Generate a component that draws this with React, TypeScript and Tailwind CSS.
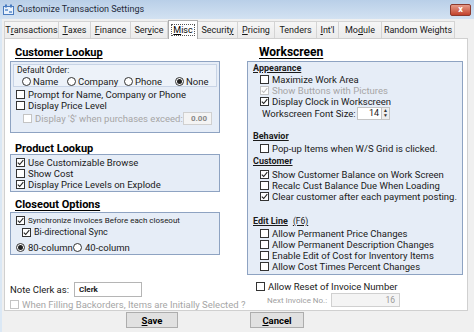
import React from "react";

const FONT = "font-['Roboto','Noto_Sans',sans-serif]";

function Check({ on, disabled }: { on?: boolean; disabled?: boolean }) {
  return (
    <span
      className={`inline-flex h-[9px] w-[9px] shrink-0 items-center justify-center border bg-white ${
        disabled ? "border-[#c4c4c4]" : "border-[#333]"
      }`}
    >
      {on && (
        <svg width="7" height="7" viewBox="0 0 7 7">
          <path
            d="M0.8 3.6 L2.7 5.5 L6.3 1.2"
            fill="none"
            stroke={disabled ? "#bdbdbd" : "#222"}
            strokeWidth="1.1"
          />
        </svg>
      )}
    </span>
  );
}

function Radio({ on }: { on?: boolean }) {
  return (
    <span className="inline-flex h-[9px] w-[9px] shrink-0 items-center justify-center rounded-full border border-[#333] bg-white">
      {on && <span className="h-[5px] w-[5px] rounded-full bg-[#222]" />}
    </span>
  );
}

function CheckRow({
  label,
  on,
  disabled,
  className = "",
}: {
  label: React.ReactNode;
  on?: boolean;
  disabled?: boolean;
  className?: string;
}) {
  return (
    <div
      className={`flex h-[11px] items-center gap-[3px] whitespace-nowrap ${
        disabled ? "text-[#a6a6a6]" : "text-[#1a1a1a]"
      } ${className}`}
    >
      <Check on={on} disabled={disabled} />
      <span>{label}</span>
    </div>
  );
}

function Heading({ children, className = "" }: { children: React.ReactNode; className?: string }) {
  return (
    <div className={`whitespace-nowrap font-bold leading-none text-black underline underline-offset-[2px] ${className}`}>
      {children}
    </div>
  );
}

function SubHeading({ children }: { children: React.ReactNode }) {
  return (
    <div className="h-[11px] whitespace-nowrap text-[9px] font-bold leading-[11px] text-[#1a1a1a] underline">
      {children}
    </div>
  );
}

const TABS: { label: React.ReactNode; w: number; active?: boolean }[] = [
  { label: <>T<u>r</u>ansactions</>, w: 55 },
  { label: <><u>T</u>axes</>, w: 32 },
  { label: <><u>F</u>inance</>, w: 40 },
  { label: <>Ser<u>v</u>ice</>, w: 37 },
  { label: <><u>M</u>isc</>, w: 30, active: true },
  { label: <>Securit<u>y</u></>, w: 40 },
  { label: <><u>P</u>ricing</>, w: 37 },
  { label: <>Tenders</>, w: 42 },
  { label: <><u>I</u>nt'l</>, w: 22 },
  { label: <>Mo<u>d</u>ule</>, w: 43 },
  { label: <>Random Weights</>, w: 73 },
];

export default function App() {
  return (
    <div className={`flex h-[332px] w-[474px] flex-col overflow-hidden bg-[#dbe8f5] ${FONT} text-[9.5px] leading-[11px]`}>
      {/* Title bar */}
      <div className="flex h-[19px] shrink-0 items-center bg-gradient-to-b from-[#b9cfe8] to-[#d3e2f2] pl-[3px] pr-[3px]">
        <svg width="11" height="11" viewBox="0 0 11 11" className="mr-[3px]">
          <rect x="0.5" y="2.5" width="10" height="8" fill="#e8f1fb" stroke="#4a7cc0" />
          <rect x="2" y="0.5" width="2" height="3" fill="#4a7cc0" />
          <rect x="7" y="0.5" width="2" height="3" fill="#4a7cc0" />
          <rect x="2" y="5" width="3" height="2" fill="#7da5d8" />
          <rect x="6" y="7" width="3" height="2" fill="#7da5d8" />
        </svg>
        <span className="text-[9px] text-[#1e2a3a]">Customize Transaction Settings</span>
        <div className="ml-auto flex h-[12px] w-[21px] items-center justify-center rounded-[2px] border border-[#8c3a2e] bg-gradient-to-b from-[#e59a88] to-[#c2412b]">
          <span className="text-[9px] font-bold leading-none text-white">x</span>
        </div>
      </div>

      {/* Body */}
      <div className="ml-[2px] flex flex-1 flex-col bg-[#f0f0f0] pl-[2px] pr-[6px]">
        {/* Tabs */}
        <div className="flex h-[19px] items-end pt-[1px]">
          {TABS.map((t, i) =>
            t.active ? (
              <div
                key={i}
                style={{ width: t.w }}
                className="relative z-10 -mb-[1px] flex h-[19px] items-center justify-center whitespace-nowrap border border-b-0 border-[#adadad] bg-white text-[9px] text-black"
              >
                <span className="border border-dotted border-[#555] px-[1px] leading-[10px]">{t.label}</span>
              </div>
            ) : (
              <div
                key={i}
                style={{ width: t.w }}
                className="flex h-[17px] items-center justify-center whitespace-nowrap border-r border-t border-[#d4d4d4] bg-gradient-to-b from-[#f6f6f6] to-[#ebebeb] text-[9px] text-[#1a1a1a] first:border-l"
              >
                {t.label}
              </div>
            )
          )}
        </div>

        {/* Content panel */}
        <div className="flex h-[273px] border border-[#d0d0d0] bg-white text-[#1a1a1a]">
          {/* Left column */}
          <div className="ml-[5px] flex w-[210px] flex-col">
            <Heading className="ml-[5px] mt-[8px] h-[14px] text-[11px]">Customer Lookup</Heading>
            <div className="h-[72px] border border-[#8ea3c2] bg-[#e6edf7] px-[2px] pt-[2px]">
              <div className="h-[23px] border border-[#c8d4e6] bg-[#edf2f9] px-[3px]">
                <div className="h-[10px] text-[8.5px] leading-[10px]">Default Order:</div>
                <div className="mt-[1px] flex h-[11px] items-center">
                  <div className="ml-[5px] flex w-[45px] items-center gap-[2px]"><Radio />Name</div>
                  <div className="flex w-[57px] items-center gap-[2px]"><Radio />Company</div>
                  <div className="flex w-[51px] items-center gap-[2px]"><Radio />Phone</div>
                  <div className="flex items-center gap-[2px]"><Radio on />None</div>
                </div>
              </div>
              <CheckRow className="ml-[3px] mt-[2px]" label="Prompt for Name, Company or Phone" />
              <CheckRow className="ml-[3px]" label="Display Price Level" />
              <div className="ml-[10px] mt-[1px] flex h-[14px] items-center">
                <CheckRow disabled label="Display '$' when purchases exceed:" />
                <div className="ml-auto mr-[5px] flex h-[13px] w-[35px] items-center justify-end border border-[#d0d0d0] bg-[#f4f4f4] pr-[4px] text-[8px] font-bold text-[#888]">
                  0.00
                </div>
              </div>
            </div>

            <Heading className="ml-[5px] mt-[10px] h-[12px] text-[11px]">Product Lookup</Heading>
            <div className="h-[38px] border border-[#8ea3c2] bg-[#e6edf7] pl-[5px] pt-[2px]">
              <CheckRow on className="h-[11.5px]" label="Use Customizable Browse" />
              <CheckRow className="h-[11.5px]" label="Show Cost" />
              <CheckRow on className="h-[11.5px]" label="Display Price Levels on Explode" />
            </div>

            <Heading className="ml-[5px] mt-[7px] h-[13px] text-[11px]">Closeout Options</Heading>
            <div className="h-[43px] border border-[#8ea3c2] bg-[#e6edf7] pl-[5px] pt-[2px]">
              <CheckRow on className="text-[8px]" label="Synchronize Invoices Before each closeout" />
              <CheckRow on className="ml-[6px] mt-[1px] text-[9px]" label="Bi-directional Sync" />
              <div className="mt-[4px] flex h-[11px] items-center">
                <div className="flex w-[57px] items-center gap-[3px] whitespace-nowrap"><Radio on />80-column</div>
                <div className="flex items-center gap-[3px] whitespace-nowrap"><Radio />40-column</div>
              </div>
            </div>

            <div className="mt-[27px] flex h-[15px] items-center">
              <span className="w-[64px] whitespace-nowrap">Note Clerk as:</span>
              <div className="flex h-[15px] w-[68px] items-center border border-[#b5b5b5] bg-white pl-[4px] text-[8px] font-bold">
                Clerk
              </div>
            </div>
            <CheckRow disabled className="mt-[2px]" label="When Filling Backorders, Items are Initially Selected ?" />
          </div>

          {/* Right column */}
          <div className="ml-[27px] flex w-[216px] flex-col">
            <Heading className="ml-[12px] mt-[7px] h-[15px] text-[12px]">Workscreen</Heading>
            <div className="h-[214px] border border-[#8ea3c2] bg-[#e6edf7] pl-[5px] pt-[1px]">
              <SubHeading>Appearance</SubHeading>
              <div className="pl-[7px]">
                <CheckRow className="h-[11.5px]" label="Maximize Work Area" />
                <CheckRow on disabled className="h-[11.5px]" label="Show Buttons with Pictures" />
                <CheckRow on className="h-[11.5px]" label="Display Clock in Workscreen" />
                <div className="flex h-[13px] items-center pl-[2px]">
                  <span className="w-[95px] whitespace-nowrap">Workscreen Font Size:</span>
                  <div className="flex h-[13px] w-[33px] items-center border border-[#c4c4c4] bg-white">
                    <span className="flex-1 pr-[2px] text-right text-[9px]">14</span>
                    <div className="flex h-[11px] w-[8px] flex-col border-l border-[#c4c4c4] bg-[#eee] text-[5px] leading-[5px] text-[#333]">
                      <span className="text-center">▲</span>
                      <span className="text-center">▼</span>
                    </div>
                  </div>
                </div>
              </div>
              <div className="mt-[11px]">
                <SubHeading>Behavior</SubHeading>
              </div>
              <div className="mt-[1px] pl-[7px]">
                <CheckRow className="h-[11.5px]" label="Pop-up Items when W/S Grid is clicked." />
              </div>
              <div className="mt-[2px]">
                <SubHeading>Customer</SubHeading>
              </div>
              <div className="mt-[2px] pl-[7px]">
                <CheckRow on className="h-[10.5px]" label="Show Customer Balance on Work Screen" />
                <CheckRow className="h-[10.5px]" label="Recalc Cust Balance Due When Loading" />
                <CheckRow on className="h-[10.5px]" label="Clear customer after each payment posting." />
              </div>
              <div className="mt-[14px] flex h-[11px] items-center gap-[5px]">
                <SubHeading>Edit Line</SubHeading>
                <span className="text-[8.5px] underline">(F6)</span>
              </div>
              <div className="mt-[1px] pl-[7px]">
                <CheckRow className="h-[10.5px]" label="Allow Permanent Price Changes" />
                <CheckRow className="h-[10.5px]" label="Allow Permanent Description Changes" />
                <CheckRow className="h-[10.5px]" label="Enable Edit of Cost for Inventory Items" />
                <CheckRow className="h-[10.5px]" label="Allow Cost Times Percent Changes" />
              </div>
            </div>
            <CheckRow className="ml-[9px] mt-[5px] h-[12px]" label="Allow Reset of Invoice Number" />
            <div className="ml-[20px] mt-[1px] flex h-[14px] items-center">
              <span className="w-[64px] whitespace-nowrap text-[8px] text-[#a0a0a0]">Next Invoice No.:</span>
              <div className="flex h-[14px] w-[69px] items-center justify-end border border-[#d0d0d0] bg-[#f4f4f4] pr-[4px] text-[8.5px] text-[#999]">
                16
              </div>
            </div>
          </div>
        </div>

        {/* Buttons */}
        <div className="flex h-[18px] items-center">
          <button className="ml-[122px] flex h-[16px] w-[52px] items-center justify-center border border-[#adadad] bg-[#e1e1e1] text-[9.5px] font-bold text-black">
            <u>S</u>ave
          </button>
          <button className="ml-[72px] flex h-[16px] w-[54px] items-center justify-center border border-[#adadad] bg-[#e1e1e1] text-[9.5px] font-bold text-black">
            <u>C</u>ancel
          </button>
        </div>
      </div>
    </div>
  );
}
